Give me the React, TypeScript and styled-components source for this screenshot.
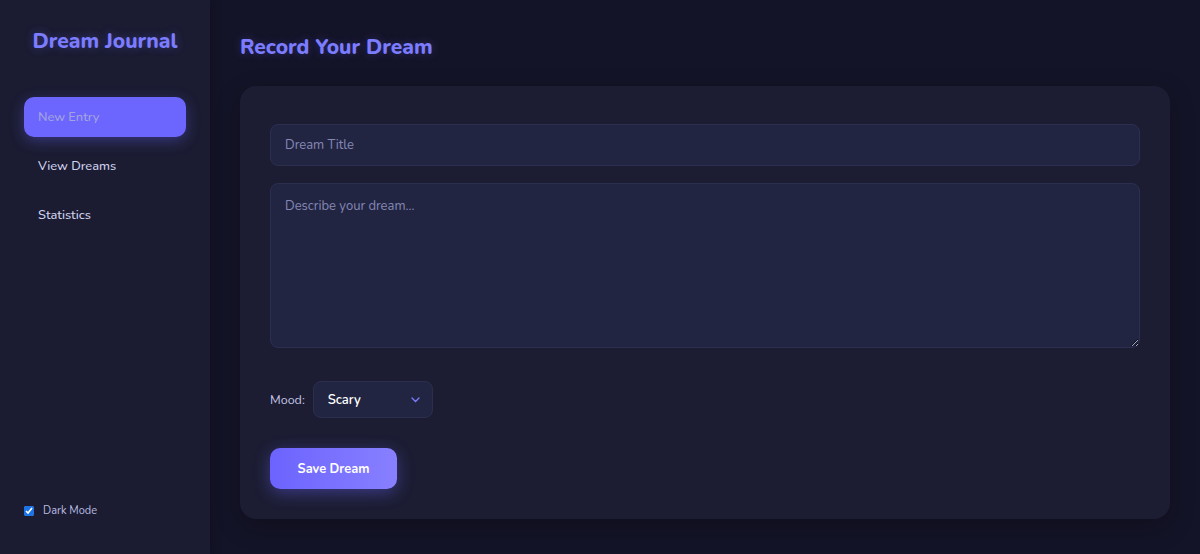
import React from "react";
import styled, { createGlobalStyle } from "styled-components";

const GlobalStyle = createGlobalStyle`
  html, body {
    margin: 0;
    padding: 0;
    height: 100%;
    background: #141428;
  }
  #root {
    height: 100%;
  }
  * {
    box-sizing: border-box;
  }
`;

const FONT = `"Nunito", "Lato", "Noto Sans", sans-serif`;

const Layout = styled.div`
  display: flex;
  height: 100vh;
  font-family: ${FONT};
  background: #141428;
`;

const Sidebar = styled.aside`
  width: 210px;
  flex-shrink: 0;
  display: flex;
  flex-direction: column;
  padding: 27px 24px 36px;
  background: #1b1c32;
  box-shadow: 2px 0 10px rgba(0, 0, 0, 0.25);
`;

const Logo = styled.h1`
  margin: 0 0 42px;
  text-align: center;
  font-size: 21px;
  font-weight: 800;
  color: #7c7cff;
  text-shadow: 0 0 8px rgba(108, 99, 255, 0.35);
`;

const Nav = styled.nav`
  display: flex;
  flex-direction: column;
  gap: 9px;
`;

const NavItem = styled.button<{ $active?: boolean }>`
  height: 40px;
  width: 100%;
  padding: 0 14px;
  border: none;
  border-radius: 10px;
  text-align: left;
  font-family: ${FONT};
  font-size: 12.8px;
  font-weight: 500;
  cursor: pointer;
  background: ${(p) => (p.$active ? "#6c66ff" : "transparent")};
  color: ${(p) => (p.$active ? "#a3a3e0" : "#cfd1ee")};
  box-shadow: ${(p) => (p.$active ? "0 4px 14px rgba(108, 99, 255, 0.35)" : "none")};
`;

const SidebarFooter = styled.label`
  margin-top: auto;
  display: flex;
  align-items: center;
  gap: 9px;
  font-size: 11px;
  color: #b9bbe0;
  cursor: pointer;

  input {
    margin: 0;
    width: 10px;
    height: 10px;
    accent-color: #1a73e8;
  }
`;

const Main = styled.main`
  flex: 1;
  padding: 30px 30px 35px;
  display: flex;
  flex-direction: column;
`;

const Title = styled.h2`
  margin: 3px 0 25px;
  font-size: 21px;
  font-weight: 800;
  color: #7c7cff;
  text-shadow: 0 0 8px rgba(108, 99, 255, 0.3);
`;

const Card = styled.section`
  background: #1c1d33;
  border-radius: 16px;
  padding: 38px 30px 30px;
  box-shadow: 0 8px 24px rgba(0, 0, 0, 0.25);
  display: flex;
  flex-direction: column;
`;

const TextInput = styled.input`
  height: 42px;
  width: 100%;
  padding: 0 14px;
  border: 1px solid #2c2e4e;
  border-radius: 8px;
  background: #222542;
  color: #e6e6ff;
  font-family: ${FONT};
  font-size: 13px;
  outline: none;

  &::placeholder {
    color: #8588b5;
  }
`;

const TextArea = styled.textarea`
  margin-top: 17px;
  height: 165px;
  width: 100%;
  padding: 13px 14px;
  border: 1px solid #2c2e4e;
  border-radius: 8px;
  background: #222542;
  color: #e6e6ff;
  font-family: ${FONT};
  font-size: 13px;
  resize: vertical;
  outline: none;

  &::placeholder {
    color: #8588b5;
  }
`;

const MoodRow = styled.div`
  margin-top: 33px;
  display: flex;
  align-items: center;
  gap: 8px;
`;

const MoodLabel = styled.label`
  font-size: 12.5px;
  color: #c4c6e6;
`;

const SelectWrap = styled.div`
  position: relative;
  width: 120px;
  height: 37px;

  svg {
    position: absolute;
    right: 13px;
    top: 50%;
    transform: translateY(-50%);
    pointer-events: none;
  }
`;

const Select = styled.select`
  appearance: none;
  width: 100%;
  height: 100%;
  padding: 0 14px;
  border: 1px solid #2c2e4e;
  border-radius: 8px;
  background: #222542;
  color: #ffffff;
  font-family: ${FONT};
  font-size: 13px;
  font-weight: 600;
  outline: none;
`;

const SaveButton = styled.button`
  margin-top: 30px;
  align-self: flex-start;
  width: 127px;
  height: 41px;
  border: none;
  border-radius: 10px;
  background: linear-gradient(90deg, #6c63ff, #8880ff);
  color: #ffffff;
  font-family: ${FONT};
  font-size: 12.8px;
  font-weight: 700;
  cursor: pointer;
  box-shadow: 0 4px 16px rgba(108, 99, 255, 0.4);
`;

const navItems = ["New Entry", "View Dreams", "Statistics"];

export default function App() {
  const [active, setActive] = React.useState("New Entry");
  const [mood, setMood] = React.useState("Scary");
  const [dark, setDark] = React.useState(true);

  return (
    <Layout>
      <GlobalStyle />
      <Sidebar>
        <Logo>Dream Journal</Logo>
        <Nav>
          {navItems.map((item) => (
            <NavItem key={item} $active={item === active} onClick={() => setActive(item)}>
              {item}
            </NavItem>
          ))}
        </Nav>
        <SidebarFooter>
          <input type="checkbox" checked={dark} onChange={(e) => setDark(e.target.checked)} />
          Dark Mode
        </SidebarFooter>
      </Sidebar>
      <Main>
        <Title>Record Your Dream</Title>
        <Card>
          <TextInput placeholder="Dream Title" />
          <TextArea placeholder="Describe your dream..." />
          <MoodRow>
            <MoodLabel htmlFor="mood">Mood:</MoodLabel>
            <SelectWrap>
              <Select id="mood" value={mood} onChange={(e) => setMood(e.target.value)}>
                <option>Happy</option>
                <option>Peaceful</option>
                <option>Scary</option>
                <option>Weird</option>
                <option>Sad</option>
              </Select>
              <svg width="9" height="6" viewBox="0 0 9 6" fill="none">
                <path d="M1 1l3.5 3.5L8 1" stroke="#7c7cff" strokeWidth="1.3" strokeLinecap="round" />
              </svg>
            </SelectWrap>
          </MoodRow>
          <SaveButton>Save Dream</SaveButton>
        </Card>
      </Main>
    </Layout>
  );
}
